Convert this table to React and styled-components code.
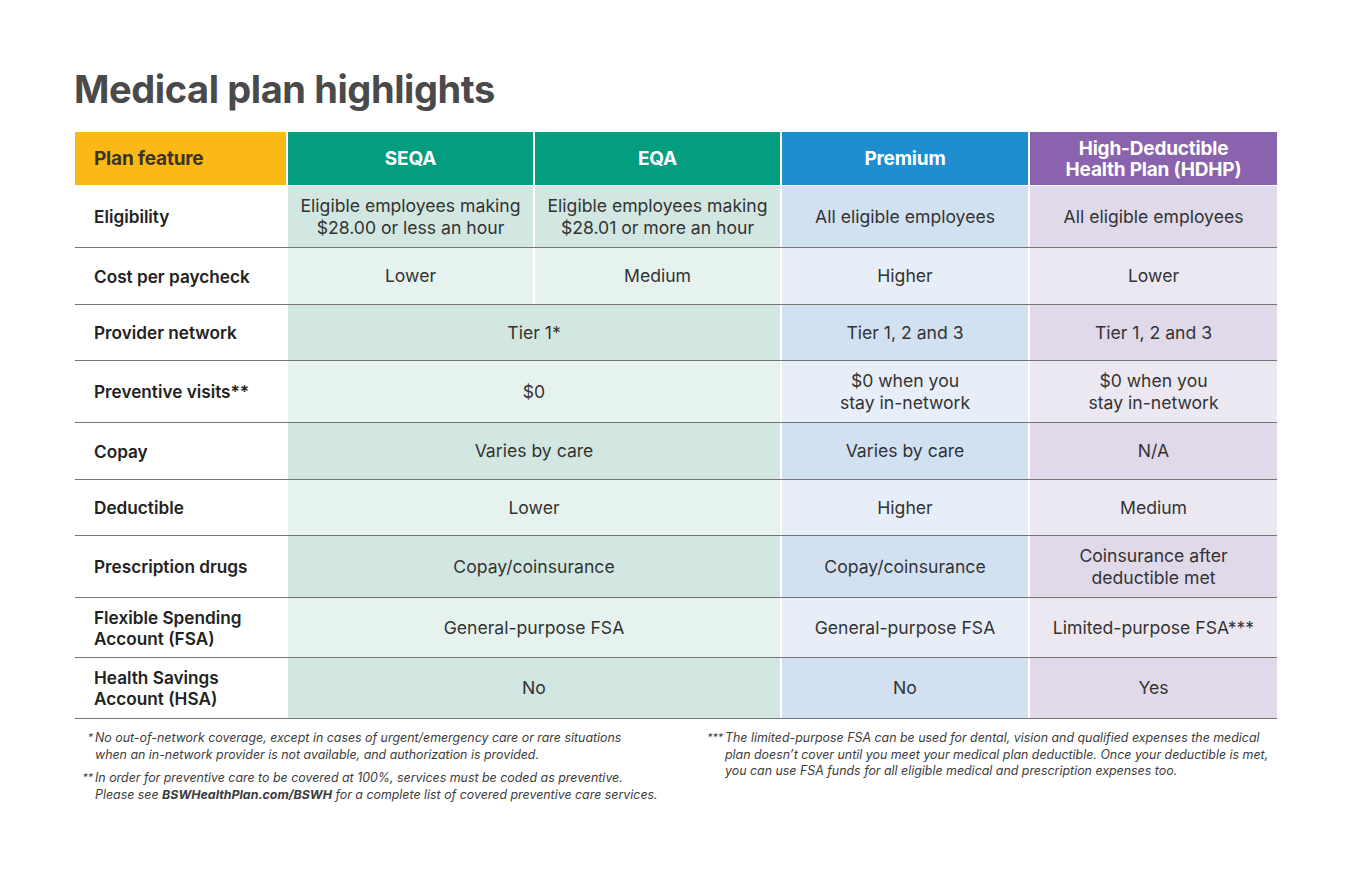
import React from "react";
import styled, { createGlobalStyle } from "styled-components";

const Global = createGlobalStyle`
  html, body { margin: 0; padding: 0; background: #ffffff; }
  body { font-family: "Inter", "Lato", "Liberation Sans", sans-serif; color: #2b2b2b; }
`;

const Page = styled.div`
  width: 1350px;
  height: 872px;
  box-sizing: border-box;
  padding: 66px 0 0 75px;
  background: #fff;
`;

const Title = styled.h1`
  margin: 0 0 0 -1px;
  font-family: "Inter", sans-serif;
  font-weight: 700;
  font-size: 38px;
  line-height: 46px;
  color: #4a4a4a;
  letter-spacing: -0.4px;
`;

const Table = styled.div`
  width: 1202px;
  margin-top: 20px;
  display: flex;
  flex-direction: column;
`;

const cols = "211px 245px 245px 246px 247px";

const HeaderRow = styled.div`
  display: grid;
  grid-template-columns: ${cols};
  column-gap: 2px;
  height: 53px;
  margin-bottom: 1px;
`;

const headBg = {
  feature: "#fbb817",
  teal: "#039d80",
  blue: "#1e8ecf",
  purple: "#8963ad",
};

const HeadCell = styled.div`
  background: ${(p) => headBg[p.$tone]};
  color: ${(p) => (p.$tone === "feature" ? "#3a3426" : "#ffffff")};
  display: flex;
  align-items: center;
  justify-content: ${(p) => (p.$tone === "feature" ? "flex-start" : "center")};
  padding-left: ${(p) => (p.$tone === "feature" ? "19px" : "0")};
  text-align: center;
  font-weight: 700;
  font-size: 19px;
  line-height: 21px;
  letter-spacing: -0.2px;
`;

const Row = styled.div`
  display: grid;
  grid-template-columns: ${cols};
  column-gap: 2px;
  height: ${(p) => p.$h}px;
  box-sizing: border-box;
  border-bottom: 1px solid #747474;
`;

const Label = styled.div`
  display: flex;
  align-items: center;
  padding-left: 19px;
  font-weight: 600;
  font-size: 17.2px;
  line-height: 21px;
  color: #222;
  background: #fff;
`;

const cellBg = {
  teal: ["#d2e7e1", "#e6f2ee"],
  blue: ["#d2e1f2", "#e7eef8"],
  purple: ["#e0d9ea", "#ece8f2"],
};

const Cell = styled.div`
  grid-column: span ${(p) => p.$span || 1};
  background: ${(p) => cellBg[p.$tone][p.$light ? 1 : 0]};
  display: flex;
  align-items: center;
  justify-content: center;
  text-align: center;
  font-size: 17.6px;
  font-weight: 400;
  line-height: 22px;
  color: #333;
`;

const Notes = styled.div`
  display: grid;
  grid-template-columns: 627px 580px;
  margin-top: 11px;
  margin-left: 5px;
`;

const NoteCol = styled.div`
  display: flex;
  flex-direction: column;
  gap: 7px;
`;

const Note = styled.div`
  display: flex;
  font-style: italic;
  font-size: 12.4px;
  line-height: 16.5px;
  color: #3c3c3c;
`;

const Marker = styled.span`
  flex: 0 0 ${(p) => p.$w}px;
  text-align: right;
  padding-right: 2px;
  box-sizing: border-box;
  font-size: 10.5px;
`;

const NoteText = styled.span`
  white-space: nowrap;
  b { font-weight: 700; }
`;

const rows = [
  {
    label: "Eligibility",
    h: 62,
    cells: [
      { tone: "teal", text: ["Eligible employees making", "$28.00 or less an hour"] },
      { tone: "teal", text: ["Eligible employees making", "$28.01 or more an hour"] },
      { tone: "blue", text: ["All eligible employees"] },
      { tone: "purple", text: ["All eligible employees"] },
    ],
  },
  {
    label: "Cost per paycheck",
    h: 57,
    cells: [
      { tone: "teal", text: ["Lower"] },
      { tone: "teal", text: ["Medium"] },
      { tone: "blue", text: ["Higher"] },
      { tone: "purple", text: ["Lower"] },
    ],
  },
  {
    label: "Provider network",
    h: 56,
    cells: [
      { tone: "teal", span: 2, text: ["Tier 1*"] },
      { tone: "blue", text: ["Tier 1, 2 and 3"] },
      { tone: "purple", text: ["Tier 1, 2 and 3"] },
    ],
  },
  {
    label: "Preventive visits**",
    h: 62,
    cells: [
      { tone: "teal", span: 2, text: ["$0"] },
      { tone: "blue", text: ["$0 when you", "stay in-network"] },
      { tone: "purple", text: ["$0 when you", "stay in-network"] },
    ],
  },
  {
    label: "Copay",
    h: 57,
    cells: [
      { tone: "teal", span: 2, text: ["Varies by care"] },
      { tone: "blue", text: ["Varies by care"] },
      { tone: "purple", text: ["N/A"] },
    ],
  },
  {
    label: "Deductible",
    h: 56,
    cells: [
      { tone: "teal", span: 2, text: ["Lower"] },
      { tone: "blue", text: ["Higher"] },
      { tone: "purple", text: ["Medium"] },
    ],
  },
  {
    label: "Prescription drugs",
    h: 62,
    cells: [
      { tone: "teal", span: 2, text: ["Copay/coinsurance"] },
      { tone: "blue", text: ["Copay/coinsurance"] },
      { tone: "purple", text: ["Coinsurance after", "deductible met"] },
    ],
  },
  {
    label: ["Flexible Spending", "Account (FSA)"],
    h: 60,
    cells: [
      { tone: "teal", span: 2, text: ["General-purpose FSA"] },
      { tone: "blue", text: ["General-purpose FSA"] },
      { tone: "purple", text: ["Limited-purpose FSA***"] },
    ],
  },
  {
    label: ["Health Savings", "Account (HSA)"],
    h: 61,
    cells: [
      { tone: "teal", span: 2, text: ["No"] },
      { tone: "blue", text: ["No"] },
      { tone: "purple", text: ["Yes"] },
    ],
  },
];

const Lines = ({ lines }) =>
  lines.map((l, i) => (
    <React.Fragment key={i}>
      {i > 0 && <br />}
      {l}
    </React.Fragment>
  ));

export default function App() {
  return (
    <>
      <Global />
      <Page>
        <Title>Medical plan highlights</Title>
        <Table>
          <HeaderRow>
            <HeadCell $tone="feature">Plan feature</HeadCell>
            <HeadCell $tone="teal">SEQA</HeadCell>
            <HeadCell $tone="teal">EQA</HeadCell>
            <HeadCell $tone="blue">Premium</HeadCell>
            <HeadCell $tone="purple">
              High-Deductible
              <br />
              Health Plan (HDHP)
            </HeadCell>
          </HeaderRow>
          {rows.map((r, ri) => (
            <Row key={ri} $h={r.h}>
              <Label>
                <span>
                  <Lines lines={Array.isArray(r.label) ? r.label : [r.label]} />
                </span>
              </Label>
              {r.cells.map((c, ci) => (
                <Cell key={ci} $tone={c.tone} $span={c.span} $light={ri % 2 === 1}>
                  <span>
                    <Lines lines={c.text} />
                  </span>
                </Cell>
              ))}
            </Row>
          ))}
        </Table>
        <Notes>
          <NoteCol>
            <Note>
              <Marker $w={15}>*</Marker>
              <NoteText>
                No out-of-network coverage, except in cases of urgent/emergency care or rare situations
                <br />
                when an in-network provider is not available, and authorization is provided.
              </NoteText>
            </Note>
            <Note>
              <Marker $w={15}>**</Marker>
              <NoteText>
                In order for preventive care to be covered at 100%, services must be coded as preventive.
                <br />
                Please see <b>BSWHealthPlan.com/BSWH</b> for a complete list of covered preventive care services.
              </NoteText>
            </Note>
          </NoteCol>
          <NoteCol>
            <Note>
              <Marker $w={18}>***</Marker>
              <NoteText>
                The limited-purpose FSA can be used for dental, vision and qualified expenses the medical
                <br />
                plan doesn’t cover until you meet your medical plan deductible. Once your deductible is met,
                <br />
                you can use FSA funds for all eligible medical and prescription expenses too.
              </NoteText>
            </Note>
          </NoteCol>
        </Notes>
      </Page>
    </>
  );
}
